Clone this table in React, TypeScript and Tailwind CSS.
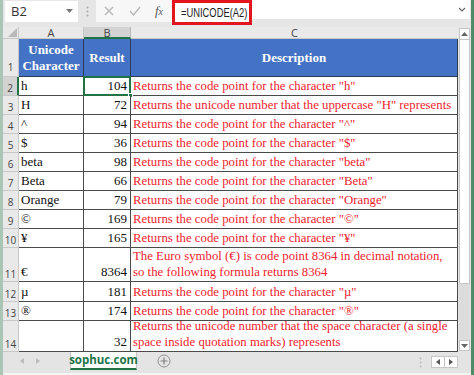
import React from "react";

type Row = {
  n: number;
  a: string;
  b: string;
  c: React.ReactNode;
  h: string;
};

const rows: Row[] = [
  { n: 2, a: "h", b: "104", c: 'Returns the code point for the character "h"', h: "h-[19px]" },
  { n: 3, a: "H", b: "72", c: 'Returns the unicode number that the uppercase "H" represents', h: "h-[19px]" },
  { n: 4, a: "^", b: "94", c: 'Returns the code point for the character "^"', h: "h-[19px]" },
  { n: 5, a: "$", b: "36", c: 'Returns the code point for the character "$"', h: "h-[19px]" },
  { n: 6, a: "beta", b: "98", c: 'Returns the code point for the character "beta"', h: "h-[19px]" },
  { n: 7, a: "Beta", b: "66", c: 'Returns the code point for the character "Beta"', h: "h-[19px]" },
  { n: 8, a: "Orange", b: "79", c: 'Returns the code point for the character "Orange"', h: "h-[19px]" },
  { n: 9, a: "©", b: "169", c: 'Returns the code point for the character "©"', h: "h-[19px]" },
  { n: 10, a: "¥", b: "165", c: 'Returns the code point for the character "¥"', h: "h-[19px]" },
  {
    n: 11,
    a: "€",
    b: "8364",
    c: (
      <>
        The Euro symbol (€) is code point 8364 in decimal notation,
        <br />
        so the following formula returns 8364
      </>
    ),
    h: "h-[34px]",
  },
  { n: 12, a: "µ", b: "181", c: 'Returns the code point for the character "µ"', h: "h-[20px]" },
  { n: 13, a: "®", b: "174", c: 'Returns the code point for the character "®"', h: "h-[19px]" },
  {
    n: 14,
    a: "",
    b: "32",
    c: (
      <>
        Returns the unicode number that the space character (a single
        <br />
        space inside quotation marks) represents
      </>
    ),
    h: "h-[31px]",
  },
];

const ui = "font-['Open_Sans','Liberation_Sans',sans-serif]";
const serif = "font-['Liberation_Serif','Times_New_Roman',serif]";

function Dots({ color }: { color: string }) {
  return (
    <svg width="3" height="11" viewBox="0 0 3 11">
      <circle cx="1.5" cy="1.5" r="1" fill={color} />
      <circle cx="1.5" cy="5.5" r="1" fill={color} />
      <circle cx="1.5" cy="9.5" r="1" fill={color} />
    </svg>
  );
}

function FormulaBar() {
  return (
    <div className="relative h-[27px] shrink-0 flex items-start">
      {/* name box */}
      <div className={`ml-[2px] mt-[1px] w-[73px] h-[21px] bg-white flex items-center justify-between pl-[6px] pr-[5px] text-[13px] text-[#333] ${ui}`}>
        <span>B2</span>
        <svg width="7" height="5" viewBox="0 0 7 5">
          <path d="M0 0h7L3.5 4z" fill="#777" />
        </svg>
      </div>
      <div className="w-[18px] h-[22px] flex items-center justify-center">
        <Dots color="#aaa" />
      </div>
      <div className="h-[22px] w-[77px] bg-[#f7f7f7] flex items-center">
        <span className="w-[26px] flex justify-center">
          <svg width="10" height="10" viewBox="0 0 10 10">
            <path d="M1 1l8 8M9 1L1 9" stroke="#b5b5b5" strokeWidth="1.3" />
          </svg>
        </span>
        <span className="w-[26px] flex justify-center">
          <svg width="12" height="10" viewBox="0 0 12 10">
            <path d="M1 5l3.5 4L11 1" stroke="#b5b5b5" strokeWidth="1.3" fill="none" />
          </svg>
        </span>
        <span className={`w-[22px] text-center italic text-[13px] text-[#555] ${serif}`}>
          f<span className="text-[10px]">x</span>
        </span>
      </div>
      <div className="flex-1 h-[19px] bg-white flex items-center justify-end pr-[4px] mr-[1px]">
        <svg width="8" height="5" viewBox="0 0 8 5">
          <path d="M1 1l3 3 3-3" stroke="#666" strokeWidth="1.2" fill="none" />
        </svg>
      </div>
      {/* highlighted formula */}
      <div className="absolute left-[169px] top-0 w-[80px] h-[25px] border-[3px] border-[#e3151f] bg-white flex items-center pl-[6px] overflow-hidden">
        <span className="inline-block whitespace-nowrap origin-left scale-x-[0.78] text-[12px] text-[#222] font-['Liberation_Sans',sans-serif]">
          =UNICODE(A2)
        </span>
      </div>
    </div>
  );
}

function ColumnHeader() {
  return (
    <div className={`h-[12px] flex text-[11px] leading-[11px] text-[#444] ${ui}`}>
      <div className="w-[16px] h-full bg-[#e9e9e9] border-r border-b border-[#c8c8c8] relative">
        <svg className="absolute right-[1px] bottom-[1px]" width="9" height="9" viewBox="0 0 9 9">
          <path d="M9 0V9H0z" fill="#b9b9b9" />
        </svg>
      </div>
      <div className="w-[65px] h-full bg-[#e9e9e9] border-r border-b border-[#c8c8c8] flex items-center justify-center">A</div>
      <div className="w-[47px] h-full bg-[#d3d3d3] border-r border-[#b8b8b8] border-b-2 border-b-[#217346] flex items-center justify-center">B</div>
      <div className="w-[327px] h-full bg-[#e9e9e9] border-b border-[#c8c8c8] flex items-center justify-center">C</div>
    </div>
  );
}

function Sheet() {
  return (
    <div className="w-[455px] flex flex-col">
      <ColumnHeader />
      {/* header row */}
      <div className="h-[38px] flex">
        <div className={`w-[16px] bg-[#e9e9e9] border-r border-b border-[#c8c8c8] flex items-end justify-center pb-[1px] text-[10px] text-[#444] ${ui}`}>1</div>
        <div className={`w-[65px] bg-[#4472c4] border-r border-b border-[#2b3a55] flex items-center justify-center text-center text-white font-bold text-[13px] leading-[16px] ${serif}`}>
          Unicode
          <br />
          Character
        </div>
        <div className={`w-[47px] bg-[#4472c4] border-r border-b border-[#2b3a55] flex items-center justify-center text-white font-bold text-[13px] ${serif}`}>
          Result
        </div>
        <div className={`w-[327px] bg-[#4472c4] border-r border-b border-[#2b3a55] flex items-center justify-center text-white font-bold text-[13px] ${serif}`}>
          Description
        </div>
      </div>
      {rows.map((r) => (
        <div key={r.n} className={`${r.h} flex`}>
          <div
            className={`w-[16px] border-b border-[#c8c8c8] flex items-end justify-center pb-[1px] text-[10px] leading-[12px] text-[#444] ${ui} ${
              r.n === 2 ? "bg-[#d3d3d3] border-r-2 border-r-[#217346]" : "bg-[#e9e9e9] border-r"
            }`}
          >
            {r.n}
          </div>
          <div className={`w-[65px] bg-white border-r border-b border-[#4a4a4a] flex items-end pl-[2px] pb-[1px] text-[13px] leading-[16px] text-[#111] ${serif}`}>
            {r.a}
          </div>
          <div className={`relative w-[47px] bg-white border-r border-b border-[#4a4a4a] flex items-end justify-end pr-[3px] pb-[1px] text-[13px] leading-[16px] text-[#111] ${serif}`}>
            {r.b}
            {r.n === 2 && (
              <>
                <div className="absolute -left-[1px] -top-[1px] -right-[1px] -bottom-[1px] border-2 border-[#217346]" />
                <div className="absolute -right-[3px] -bottom-[3px] w-[5px] h-[5px] bg-[#217346] border border-white" />
              </>
            )}
          </div>
          <div className={`w-[327px] bg-white border-r border-b border-[#4a4a4a] flex items-end pl-[2px] pb-[1px] text-[12.8px] leading-[16px] text-[#ee1c2c] whitespace-nowrap ${serif}`}>
            <div>{r.c}</div>
          </div>
        </div>
      ))}
    </div>
  );
}

function ScrollBar() {
  return (
    <div className="w-[13px] flex flex-col px-[1px] bg-[#e6e6e6]">
      <div className="h-[12px] bg-white border border-[#c6c6c6] flex items-center justify-center mt-[1px]">
        <svg width="7" height="4" viewBox="0 0 7 4">
          <path d="M0 4h7L3.5 0z" fill="#666" />
        </svg>
      </div>
      <div className="h-[244px] bg-white border-x border-b border-[#c6c6c6]" />
      <div className="flex-1 bg-[#dcdcdc]" />
      <div className="h-[11px] bg-white border border-[#c6c6c6] flex items-center justify-center mb-[1px]">
        <svg width="7" height="4" viewBox="0 0 7 4">
          <path d="M0 0h7L3.5 4z" fill="#666" />
        </svg>
      </div>
    </div>
  );
}

function TabBar() {
  return (
    <div className="h-[23px] shrink-0 flex items-start bg-[#e4e4e4] border-b-2 border-[#f4f4f4]">
      <div className="w-[67px] h-[18px] shrink-0 flex items-center pl-[17px] gap-[12px]">
        <svg width="4" height="6" viewBox="0 0 4 6">
          <path d="M4 0v6L0 3z" fill="#bdbdbd" />
        </svg>
        <svg width="4" height="6" viewBox="0 0 4 6">
          <path d="M0 0v6l4-3z" fill="#bdbdbd" />
        </svg>
      </div>
      <div className={`w-[67px] h-[18px] shrink-0 bg-white border-x border-[#c6c6c6] border-b-2 border-b-[#217346] flex items-center justify-center text-[11.5px] font-bold text-[#217346] ${ui}`}>
        sophuc.com
      </div>
      <div className="ml-[20px] h-[18px] shrink-0 flex items-center">
        <svg width="14" height="14" viewBox="0 0 14 14">
          <circle cx="7" cy="7" r="6" stroke="#8f8f8f" strokeWidth="1" fill="none" />
          <path d="M7 3.5v7M3.5 7h7" stroke="#808080" strokeWidth="1.2" />
        </svg>
      </div>
      <div className="flex-1" />
      <div className="h-[20px] flex items-center mr-[9px]">
        <Dots color="#bbb" />
      </div>
      <div className="mt-[4px] h-[12px] w-[27px] flex border border-[#c6c6c6] bg-white mr-[13px]">
        <div className="flex-1 flex items-center justify-center border-r border-[#c6c6c6]">
          <svg width="4" height="6" viewBox="0 0 4 6">
            <path d="M4 0v6L0 3z" fill="#555" />
          </svg>
        </div>
        <div className="flex-1 flex items-center justify-center">
          <svg width="4" height="6" viewBox="0 0 4 6">
            <path d="M0 0v6l4-3z" fill="#555" />
          </svg>
        </div>
      </div>
    </div>
  );
}

export default function App() {
  return (
    <div className="w-[474px] h-[375px] flex bg-[#e6e6e6] overflow-hidden">
      <div className="w-[3px] shrink-0 bg-[#a9c5b4]" />
      <div className="w-[468px] shrink-0 flex flex-col">
        <FormulaBar />
        <div className="flex shrink-0">
          <Sheet />
          <ScrollBar />
        </div>
        <TabBar />
      </div>
      <div className="w-[3px] shrink-0 bg-[#4f8b67]" />
    </div>
  );
}
